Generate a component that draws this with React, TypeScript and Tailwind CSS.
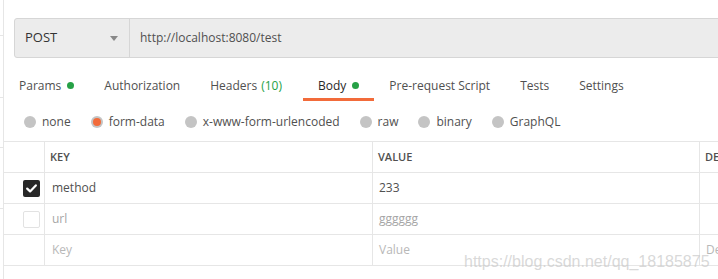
import React from 'react';

const tabs = [
  { label: 'Params', dot: true },
  { label: 'Authorization' },
  { label: 'Headers', count: '(10)' },
  { label: 'Body', dot: true, active: true },
  { label: 'Pre-request Script' },
  { label: 'Tests' },
  { label: 'Settings' },
];

const bodyTypes = ['none', 'form-data', 'x-www-form-urlencoded', 'raw', 'binary', 'GraphQL'];

const rows = [
  { key: 'method', value: '233', checked: true, disabled: false },
  { key: 'url', value: 'gggggg', checked: false, disabled: true },
];

const Checkbox = ({ checked }: { checked: boolean }) =>
  checked ? (
    <div className="w-[17px] h-[17px] rounded-[2px] bg-[#282828] flex items-center justify-center">
      <svg width="11" height="9" viewBox="0 0 11 9" fill="none">
        <path d="M1.2 4.6 L4.1 7.4 L9.8 1.4" stroke="#fff" strokeWidth="2.2" strokeLinecap="round" strokeLinejoin="round" />
      </svg>
    </div>
  ) : (
    <div className="w-[17px] h-[17px] rounded-[2px] border border-[#e2e2e2] bg-white" />
  );

export default function App() {
  return (
    <div className="relative w-[718px] h-[279px] overflow-hidden bg-white flex font-['Open_Sans',sans-serif] text-[12px] text-[#505050]">
      {/* edge of the sidebar */}
      <div className="w-[4px] shrink-0 border-r border-[#e6e6e6] flex flex-col">
        <div className="h-[36px] border-b border-[#e6e6e6]" />
        <div className="h-[62px] border-b border-[#e6e6e6]" />
        <div className="h-[50px] border-b border-[#e6e6e6]" />
        <div className="h-[61px] border-b border-[#e6e6e6]" />
      </div>

      <div className="flex-1 min-w-0 flex flex-col">
        {/* request bar */}
        <div className="mt-[18px] ml-[10px] -mr-[20px] h-[40px] flex border border-[#d6d6d6] rounded-[3px] bg-[#ececec]">
          <div className="w-[115px] shrink-0 flex items-center justify-between pl-[10px] pr-[11px] border-r border-[#d6d6d6] text-[#333] text-[13px]">
            <span>POST</span>
            <svg width="8" height="5" viewBox="0 0 8 5">
              <path d="M0 0 L8 0 L4 5 Z" fill="#888" />
            </svg>
          </div>
          <div className="flex items-center pl-[10px] text-[#505050]">http://localhost:8080/test</div>
        </div>

        {/* tabs */}
        <div className="mt-[9px] flex">
          {tabs.map((t) => (
            <div
              key={t.label}
              className={`pl-[15px] pt-[10px] pb-[4px] border-b-[3px] flex items-center leading-[17px] ${
                t.count ? 'pr-[21px]' : 'pr-[15px]'
              } ${t.active ? 'border-[#f26b3a] text-[#282828]' : 'border-transparent text-[#505050]'}`}
            >
              <span>{t.label}</span>
              {t.count && <span className="ml-[4px] text-[#26a146]">{t.count}</span>}
              {t.dot && <span className="ml-[6px] w-[7px] h-[7px] rounded-full bg-[#26a146]" />}
            </div>
          ))}
        </div>

        {/* body types */}
        <div className="mt-[12px] ml-[20px] h-[17px] flex items-center gap-[20px]">
          {bodyTypes.map((b) => (
            <div key={b} className="flex items-center gap-[6px]">
              <span className="w-[12px] h-[12px] rounded-full bg-[#c4c4c4] flex items-center justify-center">
                {b === 'form-data' && <span className="w-[8px] h-[8px] rounded-full bg-[#f26b3a]" />}
              </span>
              <span className="leading-[17px]">{b}</span>
            </div>
          ))}
        </div>

        {/* params table */}
        <div className="mt-[11px] border-b border-[#e6e6e6]">
          <div className="flex h-[31px] border-t border-[#e6e6e6]">
            <div className="w-[41px] shrink-0 border-r border-[#e6e6e6]" />
            <div className="w-[328px] shrink-0 border-r border-[#e6e6e6] flex items-center pl-[5px] text-[11px] font-semibold text-[#505050]">KEY</div>
            <div className="w-[327px] shrink-0 border-r border-[#e6e6e6] flex items-center pl-[5px] text-[11px] font-semibold text-[#505050]">VALUE</div>
            <div className="flex-1 flex items-center pl-[5px] text-[11px] font-semibold text-[#505050] whitespace-nowrap">DESCRIPTION</div>
          </div>
          {rows.map((r) => (
            <div key={r.key} className="flex h-[31px] border-t border-[#e6e6e6]">
              <div className="w-[41px] shrink-0 border-r border-[#e6e6e6] flex items-center pl-[19px]">
                <Checkbox checked={r.checked} />
              </div>
              <div className={`w-[328px] shrink-0 border-r border-[#e6e6e6] flex items-center pl-[7px] ${r.disabled ? 'text-[#a6a6a6]' : 'text-[#505050]'}`}>{r.key}</div>
              <div className={`w-[327px] shrink-0 border-r border-[#e6e6e6] flex items-center pl-[6px] ${r.disabled ? 'text-[#a6a6a6]' : 'text-[#505050]'}`}>{r.value}</div>
              <div className="flex-1" />
            </div>
          ))}
          <div className="flex h-[31px] border-t border-[#e6e6e6] text-[#b8b8b8]">
            <div className="w-[41px] shrink-0 border-r border-[#e6e6e6]" />
            <div className="w-[328px] shrink-0 border-r border-[#e6e6e6] flex items-center pl-[7px]">Key</div>
            <div className="w-[327px] shrink-0 border-r border-[#e6e6e6] flex items-center pl-[6px]">Value</div>
            <div className="flex-1 flex items-center pl-[6px] whitespace-nowrap">Description</div>
          </div>
        </div>
      </div>

      {/* watermark */}
      <div className="absolute left-[464px] top-[250px] font-['Liberation_Sans',sans-serif] text-[16px] text-[#c8c8c8]/70 whitespace-nowrap pointer-events-none">
        https://blog.csdn.net/qq_18185875
      </div>
    </div>
  );
}
